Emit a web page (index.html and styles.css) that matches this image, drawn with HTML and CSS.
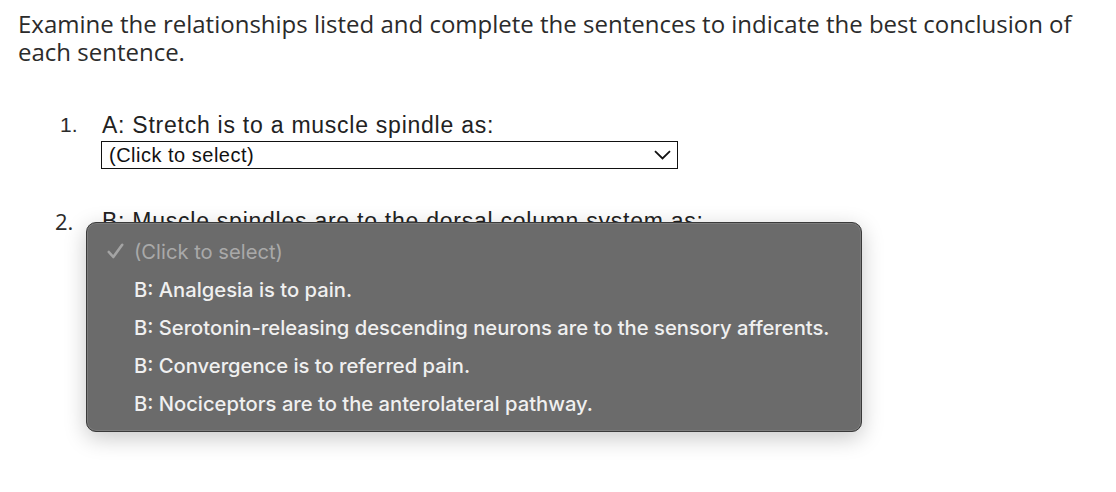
FILE: index.html
```html
<!DOCTYPE html>
<html lang="en">
<head>
  <meta charset="UTF-8">
  <title>Relationships</title>
  <link rel="stylesheet" href="styles.css">
</head>
<body>
  <div class="page">
    <p class="intro">Examine the relationships listed and complete the sentences to indicate the best conclusion of each sentence.</p>

    <ol class="questions">
      <li class="question">
        <span class="num">1.</span>
        <div class="body">
          <div class="prompt">A: Stretch is to a muscle spindle as:</div>
          <div class="select">
            <span>(Click to select)</span>
            <svg class="chev" width="17" height="10" viewBox="0 0 17 10"><path d="M1 1.2 L8.5 8.5 L16 1.2" fill="none" stroke="#111" stroke-width="1.8"/></svg>
          </div>
        </div>
      </li>
      <li class="question second">
        <span class="num">2.</span>
        <div class="body">
          <div class="prompt">B: Muscle spindles are to the dorsal column system as:</div>
        </div>
        <div class="menu">
          <div class="option disabled">
            <svg class="check" width="17" height="16" viewBox="0 0 17 16"><path d="M1.8 9 L6.3 14 L15.2 1.8" fill="none" stroke="#a4a4a4" stroke-width="2.6" stroke-linecap="round" stroke-linejoin="round"/></svg>
            <span>(Click to select)</span>
          </div>
          <div class="option">B: Analgesia is to pain.</div>
          <div class="option">B: Serotonin-releasing descending neurons are to the sensory afferents.</div>
          <div class="option">B: Convergence is to referred pain.</div>
          <div class="option">B: Nociceptors are to the anterolateral pathway.</div>
        </div>
      </li>
    </ol>
  </div>
</body>
</html>
```

FILE: styles.css
```css
html, body {
  height: 100%;
}
body {
  margin: 0;
  background: #fff;
  color: #2b2b2b;
}
.page {
  min-height: 100%;
  box-sizing: border-box;
  padding: 10px 18px;
}
.intro {
  margin: 0;
  font-family: 'Open Sans', sans-serif;
  font-size: 24px;
  line-height: 28px;
  max-width: 1080px;
}
.questions {
  list-style: none;
  margin: 47px 0 0;
  padding: 0 0 0 37px;
}
.question {
  display: flex;
  position: relative;
}
.question.second {
  margin-top: 40px;
}
.num {
  width: 42px;
  padding-left: 5px;
  font-family: 'Liberation Sans', Arial, sans-serif;
  font-size: 21px;
  line-height: 24px;
}
.second .num {
  font-family: 'Open Sans', sans-serif;
  font-size: 22px;
  padding-left: 0;
  width: 47px;
}
.prompt {
  font-family: 'Liberation Sans', Arial, sans-serif;
  font-size: 23px;
  letter-spacing: 0.75px;
  line-height: 24px;
  color: #222;
}
.select {
  display: flex;
  align-items: center;
  justify-content: space-between;
  width: 562px;
  height: 26px;
  margin: 4px 0 0 -1px;
  padding: 0 6px 0 7px;
  border: 1px solid #111;
  font-family: 'Liberation Sans', Arial, sans-serif;
  font-size: 20px;
  letter-spacing: 0.5px;
  color: #111;
}
.menu {
  position: absolute;
  left: 31px;
  top: 13px;
  width: 774px;
  padding: 9px 0;
  background: #6b6b6b;
  border: 1px solid #3a3a3a;
  border-radius: 10px;
  box-shadow: inset 0 0 0 1px #7c7c7c, 0 6px 22px rgba(0, 0, 0, 0.22);
  font-family: 'Inter', 'Noto Sans', sans-serif;
  font-size: 20.2px;
  font-weight: 500;
  color: #f0f0f0;
}
.option {
  display: flex;
  align-items: center;
  height: 38px;
  padding-left: 47px;
}
.option.disabled {
  padding-left: 20px;
  font-weight: 400;
  color: #a9a9a9;
}
.check {
  margin-right: 10px;
}
```
